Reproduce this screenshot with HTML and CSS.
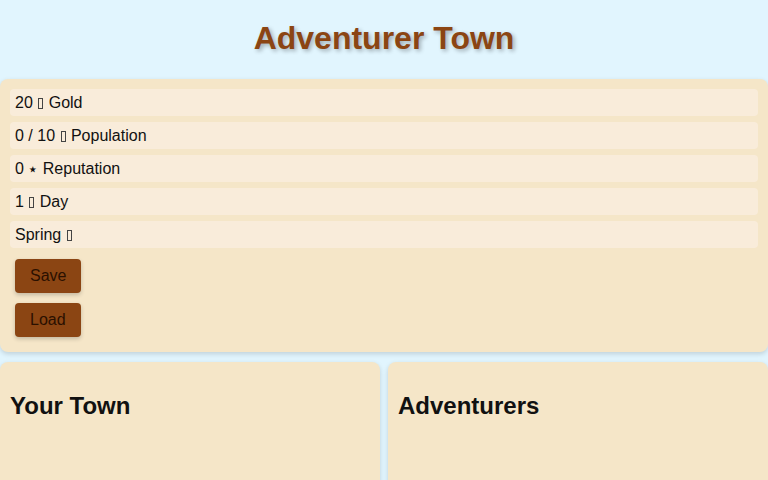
FILE: index.html
```html
<!DOCTYPE html>
<html lang="en">
  <head>
    <meta charset="UTF-8" />
    <meta name="viewport" content="width=device-width, initial-scale=1.0" />
    <title>Adventurer Town</title>
    <link rel="stylesheet" href="styles.css">
  </head>
  <body>
    <h1>Adventurer Town</h1>

    <div class="panel resources">
      <div class="stat"><span id="gold">20</span> <span class="glyph"></span> Gold</div>
      <div class="stat"><span id="pop">0</span> / <span id="popMax">10</span> <span class="glyph"></span> Population</div>
      <div class="stat"><span id="rep">0</span> <span class="star">⭑</span> Reputation</div>
      <div class="stat"><span id="day">1</span> <span class="glyph"></span> Day</div>
      <div class="stat"><span id="season">Spring</span> <span class="glyph"></span></div>
      <div class="actions">
        <button id="saveBtn">Save</button>
        <button id="loadBtn">Load</button>
      </div>
    </div>

    <div class="columns">
      <div class="panel">
        <h2>Your Town</h2>
        <div id="buildings"></div>
      </div>
      <div class="panel">
        <h2>Adventurers</h2>
        <div id="adventurers"></div>
      </div>
    </div>
  </body>
</html>
```

FILE: styles.css
```css
body {
    font-family: "Liberation Sans", Arial, sans-serif;
    margin: 0;
    background-color: #e1f5fe;
    color: #111;
}
h1 {
    text-align: center;
    color: #8b4513;
    font-size: 32px;
    margin: 20px 0 22px;
    text-shadow: 2px 2px 4px rgba(0, 0, 0, 0.3);
}
h2 {
    font-size: 24px;
    margin: 20px 0;
}
.panel {
    background-color: #f5e6c8;
    padding: 10px;
    border-radius: 8px;
    box-shadow: 0 2px 5px rgba(0, 0, 0, 0.15);
    margin-bottom: 10px;
}
.stat {
    background-color: #f9ecda;
    padding: 4px 5px;
    height: 19px;
    line-height: 19px;
    border-radius: 4px;
    margin-bottom: 6px;
}
/* missing-glyph box for icons the font can't draw */
.glyph {
    display: inline-block;
    width: 3px;
    height: 9px;
    margin: 0 1px;
    border: 1px solid #444;
    vertical-align: -1px;
}
.star {
    font-family: "DejaVu Sans", sans-serif;
    font-size: 14px;
    margin: 0 1px;
}
.actions {
    display: flex;
    flex-direction: column;
    align-items: flex-start;
}
button {
    background-color: #8b4513;
    color: #2a1000;
    border: none;
    font-family: inherit;
    font-size: 16px;
    line-height: 18px;
    padding: 8px 15px;
    border-radius: 4px;
    margin: 5px;
    cursor: pointer;
    box-shadow: 0 2px 4px rgba(0, 0, 0, 0.2);
}
button:hover {
    background-color: #a0522d;
}
.columns {
    display: grid;
    grid-template-columns: 1fr 1fr;
    gap: 8px;
}
.columns .panel {
    min-height: 200px;
}
```
